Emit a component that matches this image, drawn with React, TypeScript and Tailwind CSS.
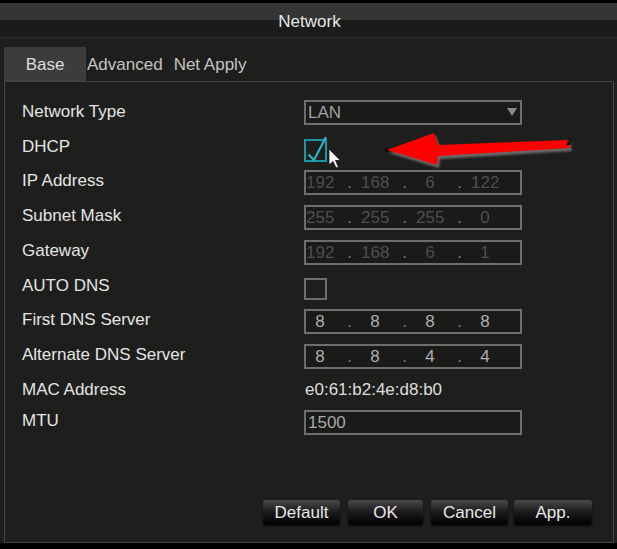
import React from "react";

const font = { fontFamily: '"Liberation Sans", Arial, sans-serif' };

function IpBox({ parts, color }: { parts: string[]; color: string }) {
  return (
    <div className="mt-[4px] flex h-[25px] w-[218px] items-center border-2 border-[#6e6e6e] bg-[#1a1a19] text-[17px] leading-none">
      {parts.map((p, i) => (
        <React.Fragment key={i}>
          <span className="w-[28px] text-center" style={{ color }}>
            {p}
          </span>
          {i < 3 && <span className="w-[27px] pl-[4px] text-center text-[#7a7a7a]">.</span>}
        </React.Fragment>
      ))}
    </div>
  );
}

function Row({ label, children, h = "h-[34.75px]" }: { label: string; children?: React.ReactNode; h?: string }) {
  return (
    <div className={`grid grid-cols-[282px_218px] items-center ${h}`}>
      <div className="text-[17px] leading-none text-[#e4e4e4]">{label}</div>
      <div className="flex items-center">{children}</div>
    </div>
  );
}

function Btn({ children, w }: { children: React.ReactNode; w: string }) {
  return (
    <div
      className={`flex h-[25px] ${w} items-center justify-center rounded-[3px] bg-linear-to-b from-[#4a4a4a] via-[#1a1a1a] to-[#030303] text-[17px] leading-none text-[#e8e8e8] shadow-[0_1px_2px_rgba(0,0,0,0.8)]`}
    >
      {children}
    </div>
  );
}

export default function App() {
  return (
    <div className="relative h-[549px] w-[617px] overflow-hidden bg-black" style={font}>
      <div className="mt-[3px] flex flex-col bg-[#1e1f1d]">
        <div className="flex h-[34px] items-center justify-center bg-[linear-gradient(to_bottom,#353535_50%,#1b1c1a_50%)] text-[17px] leading-none text-[#e6e6e6]">
          <span className="translate-x-[1px] translate-y-[1px]">Network</span>
        </div>
        <div className="h-px bg-[#303030]" />
        <div className="flex h-[43px] items-end pl-[4px]">
          <div className="flex h-[34px] w-[82px] items-center justify-center bg-[#3c3c3c] text-[17px] leading-none text-[#dcdcdc]">
            Base
          </div>
          <div className="ml-[1px] flex h-[34px] items-center text-[17px] leading-none text-[#c4c4c4]">Advanced</div>
          <div className="ml-[11px] flex h-[34px] items-center text-[17px] leading-none text-[#c4c4c4]">Net Apply</div>
        </div>
        <div className="ml-[4px] mr-[3px] flex h-[462px] flex-col border border-[#454545] bg-[#1e1f1d] pl-[17px] pt-[12px]">
          <Row label="Network Type">
            <div className="mt-[2px] flex h-[25px] w-[218px] items-center border-2 border-[#6e6e6e] bg-[#1a1a19] pl-[2px] text-[17px] leading-none text-[#a0a0a0]">
              <span>LAN</span>
              <svg className="ml-auto mr-[3px]" width="10" height="8" viewBox="0 0 10 8">
                <polygon points="0,0 10,0 5,8" fill="#8a8a8a" />
              </svg>
            </div>
          </Row>
          <Row label="DHCP">
            <div className="relative mt-[8px] h-[23px] w-[23px] border-2 border-[#1d97a5]">
              <svg className="absolute left-[-2px] top-[-2px] overflow-visible" width="23" height="23" viewBox="0 0 23 23">
                <polyline points="4.5,15.5 10,21 22,-2" fill="none" stroke="#2bb5c5" strokeWidth="2.2" />
              </svg>
            </div>
          </Row>
          <Row label="IP Address">
            <IpBox parts={["192", "168", "6", "122"]} color="#4e4e4e" />
          </Row>
          <Row label="Subnet Mask">
            <IpBox parts={["255", "255", "255", "0"]} color="#4e4e4e" />
          </Row>
          <Row label="Gateway">
            <IpBox parts={["192", "168", "6", "1"]} color="#4e4e4e" />
          </Row>
          <Row label="AUTO DNS">
            <div className="mt-[7px] h-[22px] w-[23px] border-2 border-[#6e6e6e]" />
          </Row>
          <Row label="First DNS Server">
            <IpBox parts={["8", "8", "8", "8"]} color="#b0b0b0" />
          </Row>
          <Row label="Alternate DNS Server">
            <IpBox parts={["8", "8", "4", "4"]} color="#b0b0b0" />
          </Row>
          <Row label="MAC Address">
            <span className="pl-[1px] text-[17px] leading-none text-[#dedede]">e0:61:b2:4e:d8:b0</span>
          </Row>
          <Row label="MTU" h="h-[27px]">
            <div className="mt-[3px] flex h-[25px] w-[218px] items-center border-2 border-[#6e6e6e] bg-[#1a1a19] pl-[2px] text-[17px] leading-none text-[#a8a8a8]">
              1500
            </div>
          </Row>
          <div className="flex-1" />
          <div className="flex justify-end pb-[17px] pr-[21px]">
            <Btn w="w-[77px]">Default</Btn>
            <div className="w-[8px]" />
            <Btn w="w-[75px]">OK</Btn>
            <div className="w-[8px]" />
            <Btn w="w-[77px]">Cancel</Btn>
            <div className="w-[6px]" />
            <Btn w="w-[78px]">App.</Btn>
          </div>
        </div>
      </div>

      <svg className="pointer-events-none absolute left-0 top-0" width="617" height="549" viewBox="0 0 617 549">
        <defs>
          <filter id="sh" x="-10%" y="-30%" width="130%" height="180%">
            <feGaussianBlur stdDeviation="1.2" />
          </filter>
        </defs>
        <polygon
          points="387,150 434,133 438,145 568,140 570,148 438,156 437,165"
          fill="#8a8a8a"
          opacity="0.7"
          transform="translate(2,3)"
          filter="url(#sh)"
        />
        <polygon points="387,150 434,133 438,145 568,140 570,148 438,156 437,165" fill="#ff0000" />
        <rect x="385" y="148.5" width="3" height="3" fill="#000" />
        <rect x="567" y="142" width="3" height="3" fill="#000" />
        <g transform="translate(329,149)">
          <polygon points="0,0 0,16 4,12.5 7,19 9.5,18 6.5,11.5 11.5,11.5" fill="#ffffff" stroke="#111" strokeWidth="0.8" />
        </g>
      </svg>
    </div>
  );
}
